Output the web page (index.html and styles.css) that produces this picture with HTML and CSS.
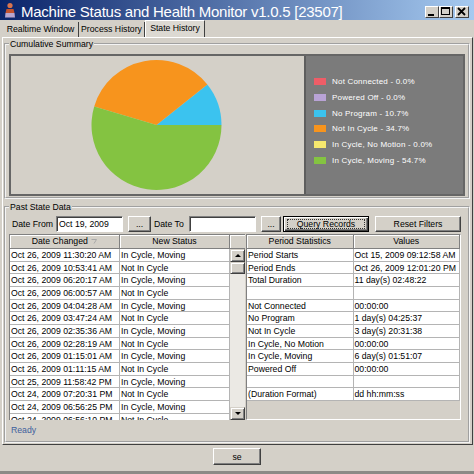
FILE: index.html
```html
<!DOCTYPE html>
<html>
<head>
<meta charset="utf-8">
<link rel="stylesheet" href="styles.css">
</head>
<body>
<div class="window">
  <div class="titlebar">
    <svg class="app-icon" viewBox="0 0 12 16" width="12" height="16">
      <circle cx="6" cy="3.5" r="2.6" fill="#d9744f"/>
      <path d="M2.5 7 L9.5 7 L10.5 11 L1.5 11 Z" fill="#c4532f"/>
      <path d="M1.5 11 L10.5 11 L11 15.5 L1 15.5 Z" fill="#b9a6cf"/>
    </svg>
    <span class="title">Machine Status and Health Monitor v1.0.5 [23507]</span>
    <div class="controls">
      <span class="cbtn"><svg viewBox="0 0 14 12" width="14" height="12"><rect x="3" y="8" width="6" height="2" fill="#000"/></svg></span>
      <span class="cbtn"><svg viewBox="0 0 14 12" width="14" height="12"><rect x="2.5" y="1.5" width="8" height="7" fill="none" stroke="#000" stroke-width="1"/><rect x="2" y="1" width="9" height="2" fill="#000"/></svg></span>
      <span class="cbtn close"><svg viewBox="0 0 14 12" width="14" height="12"><path d="M3 2 L10 9 M10 2 L3 9" stroke="#000" stroke-width="1.8"/></svg></span>
    </div>
  </div>

  <div class="tabs">
    <div class="tab t1">Realtime Window</div>
    <div class="tab t2">Process History</div>
    <div class="tab t3 active">State History</div>
  </div>

  <div class="tabpanel">
    <fieldset class="group summary">
      <legend>Cumulative Summary</legend>
      <div class="summary-box">
        <div class="chart">
          <svg viewBox="0 0 291 138" width="291" height="138">
            <path d="M145.5,69 L210.5,69 A65,65 0 0 0 196.34,28.5 Z" fill="#3bc3ef"/>
            <path d="M145.5,69 L196.34,28.5 A65,65 0 0 0 83.2,50.47 Z" fill="#f7941d"/>
            <path d="M145.5,69 L83.2,50.47 A65,65 0 1 0 210.5,69 Z" fill="#84c341"/>
          </svg>
        </div>
        <div class="legend">
          <div class="litem"><span class="swatch sw-red"></span>Not Connected - 0.0%</div>
          <div class="litem"><span class="swatch sw-lav"></span>Powered Off - 0.0%</div>
          <div class="litem"><span class="swatch sw-blue"></span>No Program - 10.7%</div>
          <div class="litem"><span class="swatch sw-orange"></span>Not In Cycle - 34.7%</div>
          <div class="litem"><span class="swatch sw-yellow"></span>In Cycle, No Motion - 0.0%</div>
          <div class="litem"><span class="swatch sw-green"></span>In Cycle, Moving - 54.7%</div>
        </div>
      </div>
    </fieldset>

    <fieldset class="group past">
      <legend>Past State Data</legend>
      <div class="filters">
        <span class="flabel from">Date From</span>
        <span class="input">Oct 19, 2009</span>
        <span class="btn dots d1">...</span>
        <span class="flabel to">Date To</span>
        <span class="input"></span>
        <span class="btn dots d2">...</span>
        <span class="btn query"><span class="focus">Query Records</span></span>
        <span class="btn reset">Reset Filters</span>
      </div>

      <div class="tables">
        <div class="pane left">
          <div class="thead">
            <div class="th c1">Date Changed <svg class="sort" viewBox="0 0 6 5" width="6" height="5"><path d="M0.5 0.5 H5.5 L3 4.5" fill="none" stroke="#a8a8a8" stroke-width="1"/></svg></div>
            <div class="th c2">New Status</div>
            <div class="th corner"></div>
          </div>
          <div class="tbody">
            <div class="rows">
              <div class="tr"><div class="td c1">Oct 26, 2009 11:30:20 AM</div><div class="td c2">In Cycle, Moving</div></div>
              <div class="tr"><div class="td c1">Oct 26, 2009 10:53:41 AM</div><div class="td c2">Not In Cycle</div></div>
              <div class="tr"><div class="td c1">Oct 26, 2009 06:20:17 AM</div><div class="td c2">In Cycle, Moving</div></div>
              <div class="tr"><div class="td c1">Oct 26, 2009 06:00:57 AM</div><div class="td c2">Not In Cycle</div></div>
              <div class="tr"><div class="td c1">Oct 26, 2009 04:04:28 AM</div><div class="td c2">In Cycle, Moving</div></div>
              <div class="tr"><div class="td c1">Oct 26, 2009 03:47:24 AM</div><div class="td c2">Not In Cycle</div></div>
              <div class="tr"><div class="td c1">Oct 26, 2009 02:35:36 AM</div><div class="td c2">In Cycle, Moving</div></div>
              <div class="tr"><div class="td c1">Oct 26, 2009 02:28:19 AM</div><div class="td c2">Not In Cycle</div></div>
              <div class="tr"><div class="td c1">Oct 26, 2009 01:15:01 AM</div><div class="td c2">In Cycle, Moving</div></div>
              <div class="tr"><div class="td c1">Oct 26, 2009 01:11:15 AM</div><div class="td c2">Not In Cycle</div></div>
              <div class="tr"><div class="td c1">Oct 25, 2009 11:58:42 PM</div><div class="td c2">In Cycle, Moving</div></div>
              <div class="tr"><div class="td c1">Oct 24, 2009 07:20:31 PM</div><div class="td c2">Not In Cycle</div></div>
              <div class="tr"><div class="td c1">Oct 24, 2009 06:56:25 PM</div><div class="td c2">In Cycle, Moving</div></div>
              <div class="tr"><div class="td c1">Oct 24, 2009 06:56:10 PM</div><div class="td c2">Not In Cycle</div></div>
            </div>
            <div class="vscroll">
              <div class="sbtn"><span class="arr up"></span></div>
              <div class="thumb"></div>
              <div class="track"></div>
              <div class="sbtn"><span class="arr down"></span></div>
            </div>
          </div>
        </div>

        <div class="pane right">
          <div class="thead">
            <div class="th r1">Period Statistics</div>
            <div class="th r2">Values</div>
          </div>
          <div class="rows">
            <div class="tr"><div class="td r1">Period Starts</div><div class="td r2">Oct 15, 2009 09:12:58 AM</div></div>
            <div class="tr"><div class="td r1">Period Ends</div><div class="td r2">Oct 26, 2009 12:01:20 PM</div></div>
            <div class="tr"><div class="td r1">Total Duration</div><div class="td r2">11 day(s) 02:48:22</div></div>
            <div class="tr"><div class="td r1"></div><div class="td r2"></div></div>
            <div class="tr"><div class="td r1">Not Connected</div><div class="td r2">00:00:00</div></div>
            <div class="tr"><div class="td r1">No Program</div><div class="td r2">1 day(s) 04:25:37</div></div>
            <div class="tr"><div class="td r1">Not In Cycle</div><div class="td r2">3 day(s) 20:31:38</div></div>
            <div class="tr"><div class="td r1">In Cycle, No Motion</div><div class="td r2">00:00:00</div></div>
            <div class="tr"><div class="td r1">In Cycle, Moving</div><div class="td r2">6 day(s) 01:51:07</div></div>
            <div class="tr"><div class="td r1">Powered Off</div><div class="td r2">00:00:00</div></div>
            <div class="tr"><div class="td r1"></div><div class="td r2"></div></div>
            <div class="tr"><div class="td r1">(Duration Format)</div><div class="td r2">dd hh:mm:ss</div></div>
          </div>
        </div>
      </div>

      <div class="status">Ready</div>
    </fieldset>
  </div>

  <div class="footer">
    <span class="btn closebtn">se</span>
  </div>
  <div class="bottom-strip"></div>
</div>
</body>
</html>
```

FILE: styles.css
```css
* { box-sizing: border-box; }
html, body { margin: 0; padding: 0; }
body {
  width: 474px;
  height: 474px;
  overflow: hidden;
  background: #d4d0c8;
  font-family: "Liberation Sans", Arial, sans-serif;
  font-size: 8.7px;
  color: #000;
}

.window { display: flex; flex-direction: column; height: 474px; }

/* title bar */
.titlebar {
  height: 20px;
  flex: none;
  display: flex;
  align-items: flex-start;
  padding: 0 5px 0 3px;
  background: linear-gradient(to right, #0a246a 0%, #a6caf0 100%);
  color: #fff;
}
.app-icon { margin: 2px 5px 0 1px; flex: none; }
.title {
  flex: 1;
  font-size: 15px;
  letter-spacing: -0.25px;
  line-height: 16px;
  margin-top: 4px;
  white-space: nowrap;
}
.controls { display: flex; margin-top: 6px; }
.cbtn {
  width: 14px;
  height: 12px;
  background: #d4d0c8;
  border: 1px solid;
  border-color: #fff #404040 #404040 #fff;
  display: flex;
  align-items: center;
  justify-content: center;
  overflow: hidden;
}
.cbtn svg { flex: none; }
.cbtn.close { margin-left: 2px; }

/* tabs */
.tabs { height: 17px; flex: none; display: flex; align-items: flex-end; padding-left: 3px; }
.tab {
  height: 15px;
  line-height: 14px;
  text-align: center;
  white-space: nowrap;
  border-right: 1px solid #404040;
}
.tab.t1 { width: 76px; }
.tab.t2 { width: 66px; }
.tab.t3 { width: 60px; }
.tab.active {
  height: 17px;
  line-height: 14px;
  background: #dcd9d2;
  border-top: 1px solid #fff;
  border-left: 1px solid #fff;
}

/* tab panel */
.tabpanel {
  flex: none;
  margin: 0 1px 0 2px;
  border: 1px solid;
  border-color: #fff #404040 #404040 #fff;
  padding: 1px 0 1px 0;
}

.group {
  margin: 0 2px 0 1px;
  padding: 0 3px;
  border: 2px groove #f4f4f4;
  min-width: 0;
}
.group legend { padding: 0 1px; line-height: 10px; font-size: 8.7px; }
.summary { padding-top: 5px; padding-bottom: 1px; }
.past { margin-top: 3px; padding-top: 4px; }

/* summary */
.summary-box {
  height: 142px;
  display: flex;
  border: 2px solid #666;
}
.chart { flex: 1; background: #d4d0c8; display: flex; }
.legend {
  width: 159px;
  flex: none;
  background: #7b7b7b;
  border-left: 2px solid #5e5e5e;
  padding: 18px 0 0 8px;
}
.litem {
  height: 15.7px;
  display: flex;
  align-items: center;
  color: #fff;
  font-size: 8px;
  letter-spacing: 0.2px;
  white-space: nowrap;
}
.swatch { width: 12px; height: 7px; margin-right: 6px; flex: none; }
.sw-red { background: #ef5d67; }
.sw-lav { background: #b9a3d6; }
.sw-blue { background: #3bc3ef; }
.sw-orange { background: #f7941d; }
.sw-yellow { background: #f6e76e; }
.sw-green { background: #84c341; }

/* filters */
.filters { height: 16px; display: flex; align-items: center; }
.flabel { white-space: nowrap; }
.flabel.from { width: 44px; margin-left: 3px; }
.flabel.to { width: 35px; margin-left: 3px; }
.input {
  width: 67px;
  height: 16px;
  background: #fff;
  border: 1px solid;
  border-color: #808080 #fff #fff #808080;
  box-shadow: inset 1px 1px 0 #404040;
  padding: 0 2px;
  line-height: 14px;
  white-space: nowrap;
}
.btn {
  height: 16px;
  background: #d4d0c8;
  border: 1px solid;
  border-color: #fff #404040 #404040 #fff;
  box-shadow: inset -1px -1px 0 #808080;
  display: flex;
  align-items: center;
  justify-content: center;
  white-space: nowrap;
}
.btn.d1 { width: 23px; margin-left: 5px; }
.btn.d2 { width: 20px; margin-left: 5px; }
.btn.query {
  width: 86px;
  margin-left: 2px;
  border: 1px solid #000;
  box-shadow: inset 1px 1px 0 #fff, inset -1px -1px 0 #404040, inset -2px -2px 0 #808080;
}
.btn.query .focus {
  width: 78px;
  height: 10px;
  border: 1px dotted #333;
  line-height: 8px;
  text-align: center;
}
.btn.reset { width: 86px; margin-left: 6px; }

/* tables */
.tables { height: 186px; margin-top: 2px; display: flex; }
.pane {
  display: flex;
  flex-direction: column;
  border-top: 1px solid #808080;
  border-left: 1px solid #808080;
}
.pane.left { width: 236px; }
.pane.right {
  width: 215px;
  margin-left: 1px;
  border-right: 1px solid #fff;
  border-bottom: 1px solid #fff;
}
.thead { height: 14px; display: flex; flex: none; }
.th {
  height: 14px;
  line-height: 13px;
  text-align: center;
  white-space: nowrap;
  background: #d4d0c8;
  border-right: 1px solid #808080;
  border-bottom: 1px solid #808080;
  box-shadow: inset 1px 1px 0 #fff;
}
.th .sort { margin-left: 1px; vertical-align: 0; }
.c1 { width: 110px; }
.c2 { width: 110px; }
.th.corner { width: 15px; border-right: none; }
.r1 { width: 107px; }
.r2 { width: 107px; }

.tbody { flex: 1; display: flex; min-height: 0; }
.rows { overflow: hidden; }
.pane.left .rows { width: 220px; background: #fff; }
.pane.right .rows { flex: 1; }
.tr { display: flex; height: 12.67px; }
.td {
  background: #fff;
  border-right: 1px solid #b4b4b4;
  border-bottom: 1px solid #b4b4b4;
  padding-left: 1px;
  line-height: 12px;
  white-space: nowrap;
  overflow: hidden;
}

.vscroll { width: 15px; display: flex; flex-direction: column; background: #ebe9e4; }
.sbtn, .thumb {
  height: 13px;
  flex: none;
  background: #d4d0c8;
  border: 1px solid;
  border-color: #d4d0c8 #404040 #404040 #d4d0c8;
  box-shadow: inset 1px 1px 0 #fff, inset -1px -1px 0 #808080;
  display: flex;
  align-items: center;
  justify-content: center;
}
.thumb { height: 12px; }
.track { flex: 1; }
.arr { width: 0; height: 0; border-left: 3px solid transparent; border-right: 3px solid transparent; }
.arr.up { border-bottom: 3px solid #000; }
.arr.down { border-top: 3px solid #000; }

.status {
  height: 21px;
  line-height: 20px;
  padding-left: 2px;
  color: #41609d;
}

/* footer */
.footer {
  height: 26px;
  flex: none;
  display: flex;
  justify-content: center;
  padding-top: 3px;
}
.btn.closebtn { width: 48px; height: 17px; }
.bottom-strip { flex: 1; background: #8c8a86; }
```
